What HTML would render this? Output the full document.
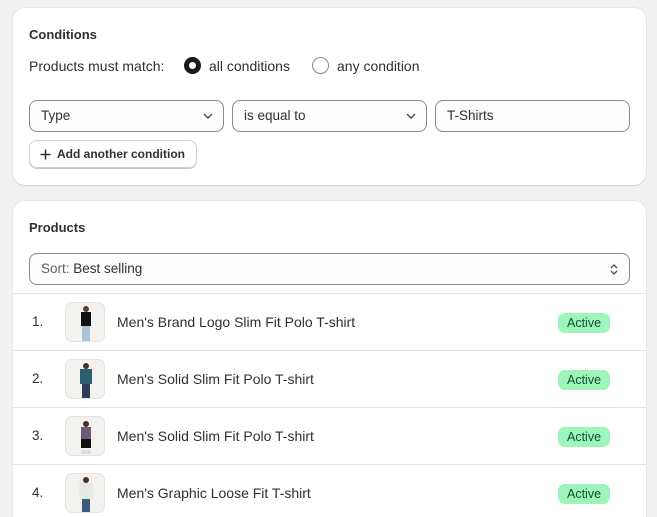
<!DOCTYPE html>
<html><head><meta charset="utf-8"><style>
*{box-sizing:border-box;margin:0;padding:0}
html,body{width:657px;height:517px;overflow:hidden}
body{background:#f1f1f1;font-family:"Liberation Sans",sans-serif;color:#303030;position:relative;font-size:13.5px}
.card{position:absolute;left:13px;width:633px;background:#fff;border-radius:12px;box-shadow:0 1px 0 #d4d4d4,0 0 0 1px #e6e6e6}
.h{position:absolute;left:16px;font-weight:bold;font-size:13px;color:#303030}
.inp{position:absolute;height:32px;border:1px solid #8a8a8a;border-radius:8px;background:#fdfdfd;padding-left:11px;line-height:30px;font-size:13.5px}
.chev{position:absolute;right:10px;top:11px}
.btn{position:absolute;left:16px;top:132px;height:28px;width:168px;border:1px solid #d0d0d0;border-radius:8px;box-shadow:0 1px 0 #c8c8c8;font-weight:bold;font-size:12px;line-height:26px;padding-left:27px}
.row{position:absolute;left:0;width:633px;height:57px;border-top:1px solid #e3e3e3}
.num{position:absolute;left:19px;top:20px}
.th{position:absolute;left:52px;top:8px;width:40px;height:40px;border:1px solid #e3e3e3;border-radius:7px;background:#f4f2ee;overflow:hidden}
.nm{position:absolute;left:104px;top:20px;font-size:14px}
.badge{position:absolute;left:545px;top:19px;background:#9ef5b9;color:#0c5132;border-radius:7px;font-size:12.5px;padding:0 9px;height:20px;line-height:20px}
</style></head><body>
<div class="card" style="top:8px;height:177px">
<div class="h" style="top:19px">Conditions</div>
<div style="position:absolute;left:16px;top:50px;font-size:14px">Products must match:</div>
<div style="position:absolute;left:171px;top:49px;width:17px;height:17px;border-radius:50%;border:5px solid #1a1a1a"></div>
<div style="position:absolute;left:196px;top:50px;font-size:14px">all conditions</div>
<div style="position:absolute;left:299px;top:49px;width:17px;height:17px;border-radius:50%;border:1px solid #8a8a8a"></div>
<div style="position:absolute;left:324px;top:50px;font-size:14px">any condition</div>
<div class="inp" style="left:16px;top:92px;width:195px">Type<svg class="chev" width="10" height="8" viewBox="0 0 10 8"><path d="M1 2l4 4 4-4" stroke="#4a4a4a" stroke-width="1.4" fill="none"/></svg></div>
<div class="inp" style="left:219px;top:92px;width:195px">is equal to<svg class="chev" width="10" height="8" viewBox="0 0 10 8"><path d="M1 2l4 4 4-4" stroke="#4a4a4a" stroke-width="1.4" fill="none"/></svg></div>
<div class="inp" style="left:422px;top:92px;width:195px">T-Shirts</div>
<div class="btn"><svg style="position:absolute;left:10px;top:8px" width="11" height="11" viewBox="0 0 11 11"><path d="M5.5 0.5v10M0.5 5.5h10" stroke="#303030" stroke-width="1.5"/></svg>Add another condition</div>
</div>
<div class="card" style="top:201px;height:316px;border-radius:12px 12px 0 0;overflow:hidden">
<div class="h" style="top:19px">Products</div>
<div class="inp" style="left:16px;top:52px;width:601px;height:32px"><span style="color:#616161">Sort:</span> Best selling<svg style="position:absolute;right:10px;top:9px" width="10" height="13" viewBox="0 0 10 13"><path d="M2 5l3-3 3 3M2 8l3 3 3-3" stroke="#4a4a4a" stroke-width="1.3" fill="none"/></svg></div>
<div class="row" style="top:92px"><span class="num">1.</span><div class="th"><svg width="40" height="40"><circle cx="20" cy="6" r="3" fill="#5a3e30"/><rect x="15" y="9" width="10" height="14" fill="#111"/><rect x="16" y="23" width="8" height="15" fill="#a9c4d6"/></svg></div><span class="nm">Men's Brand Logo Slim Fit Polo T-shirt</span><span class="badge">Active</span></div>
<div class="row" style="top:149px"><span class="num">2.</span><div class="th"><svg width="40" height="40"><circle cx="20" cy="6" r="3" fill="#4a3020"/><rect x="14" y="9" width="12" height="15" fill="#2e5d72"/><rect x="16" y="24" width="8" height="15" fill="#2b3f5a"/></svg></div><span class="nm">Men's Solid Slim Fit Polo T-shirt</span><span class="badge">Active</span></div>
<div class="row" style="top:206px"><span class="num">3.</span><div class="th"><svg width="40" height="40"><circle cx="20" cy="7" r="3" fill="#4a3020"/><rect x="15" y="10" width="10" height="12" fill="#6b5a78"/><rect x="15" y="22" width="10" height="9" fill="#111"/><rect x="15" y="33" width="10" height="4" fill="#ddd"/></svg></div><span class="nm">Men's Solid Slim Fit Polo T-shirt</span><span class="badge">Active</span></div>
<div class="row" style="top:263px"><span class="num">4.</span><div class="th"><svg width="40" height="40"><circle cx="20" cy="6" r="3" fill="#4a3020"/><rect x="13" y="9" width="14" height="16" fill="#e6ebe6"/><rect x="16" y="25" width="8" height="15" fill="#3d5a80"/></svg></div><span class="nm">Men's Graphic Loose Fit T-shirt</span><span class="badge">Active</span></div>
</div>
</body></html>
